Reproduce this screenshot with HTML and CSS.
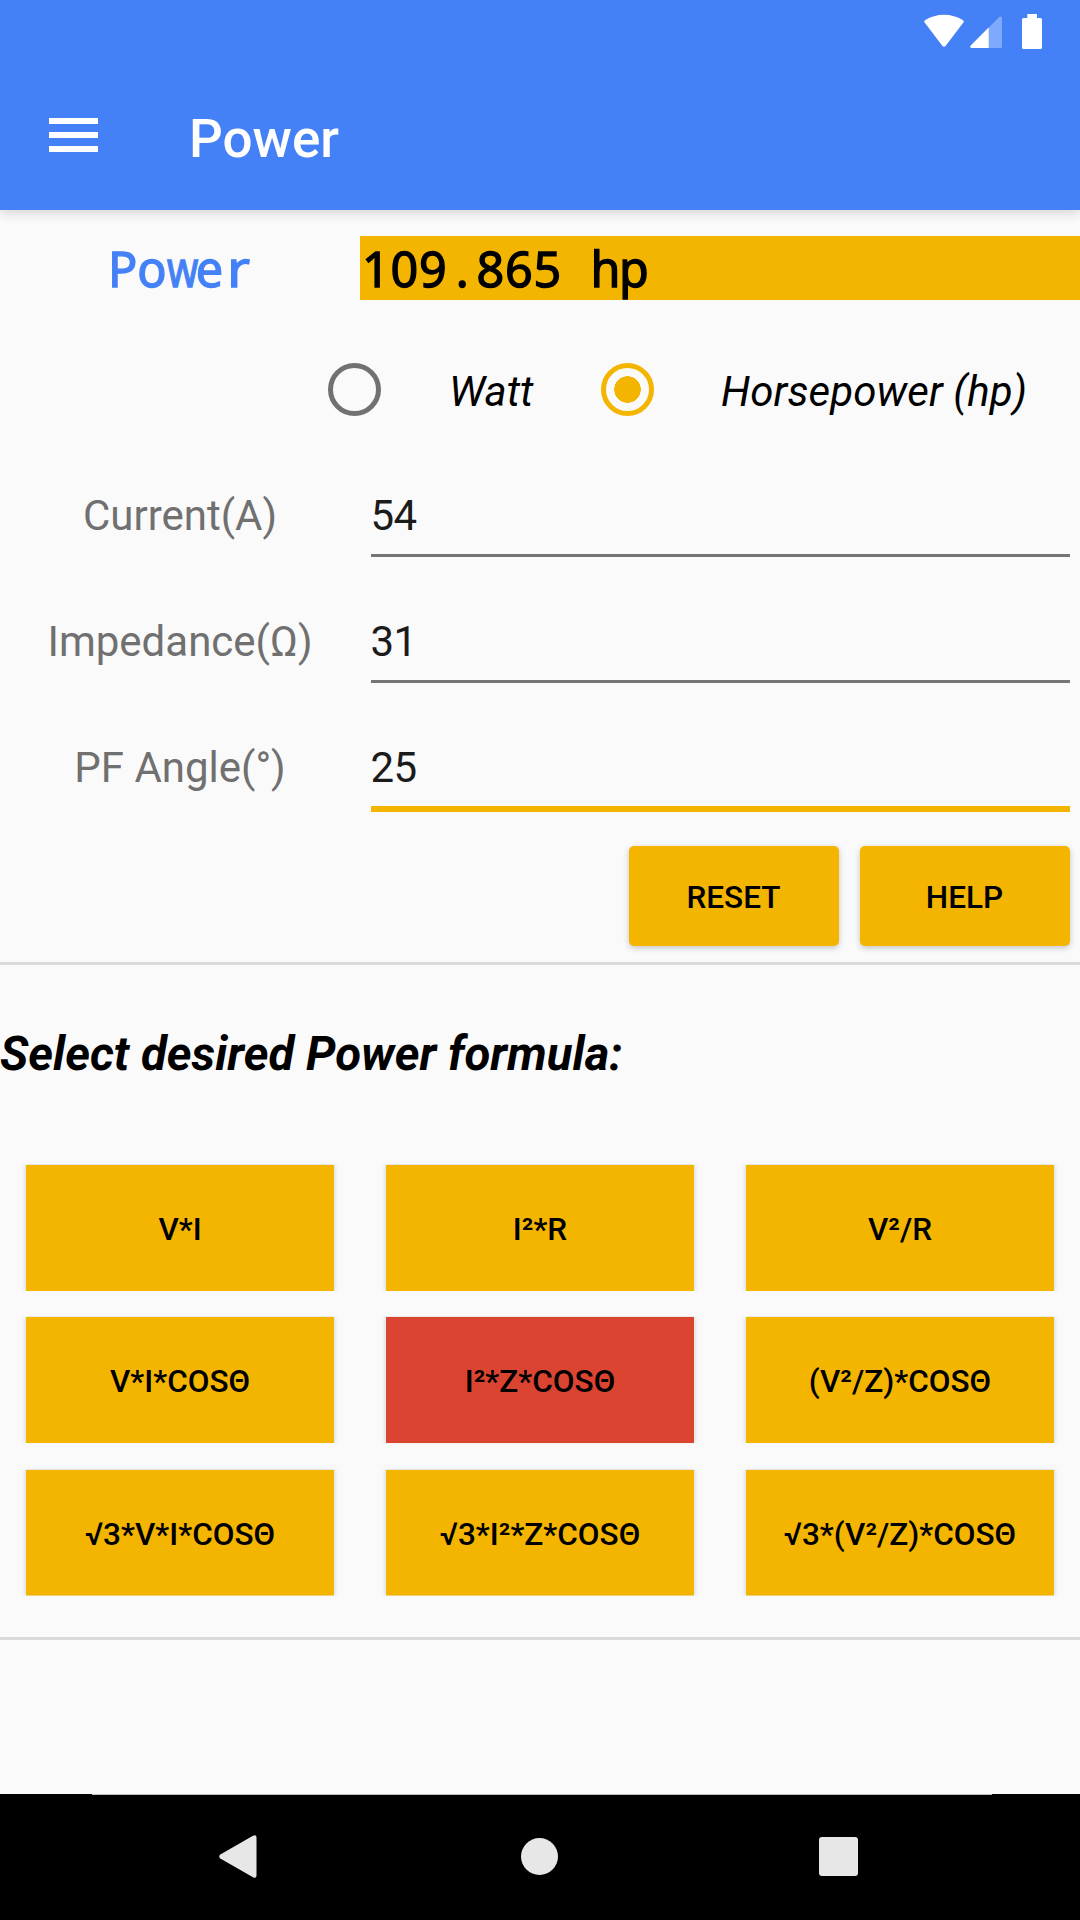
FILE: index.html
```
<!DOCTYPE html>
<html>
<head>
<meta charset="utf-8">
<title>Power</title>
<link rel="stylesheet" href="styles.css">
</head>
<body>
<header class="topbar">
  <div class="status">
    <svg class="wifi" width="42" height="34" viewBox="0 0 42 34"><path d="M1.6 8.5Q.6 7.2 2 6.3Q10.500 .8 21 .8T40 6.300Q41.400 7.200 40.400 8.500L22.700 31.700Q21 33.600 19.300 31.700Z" fill="#fff"/></svg>
    <svg class="signal" width="32" height="32" viewBox="0 0 32 32"><path d="M29.500 .8Q31.800 -.3 32 2V30.500Q32 32 30.500 32H1.800Q-.8 31.600 .8 29.500Z" fill="#7fa9fa"/><path d="M18.700 11.600V32H1.800Q-.8 31.600 .8 29.500Z" fill="#fff"/></svg>
    <svg class="battery" width="20" height="35" viewBox="0 0 20 35"><path d="M5.300 0H15V4H18.500Q20 4 20 5.500V33.500Q20 35 18.500 35H1.500Q0 35 0 33.500V5.500Q0 4 1.500 4H5.300Z" fill="#fff"/></svg>
  </div>
  <div class="title-row">
    <div class="menu"><i></i><i></i><i></i></div>
    <div class="title">Power</div>
  </div>
</header>

<section class="calc">
  <div class="result">
    <div class="result-label">Po<span class="cell"><span class="narrow">w</span></span>e<span class="r">r</span></div>
    <div class="result-value">109<span class="dot">.</span>865<span class="space"> </span><span class="unit">hp</span></div>
  </div>
  <div class="units">
    <span class="radio"></span><span class="watt">Watt</span>
    <span class="radio on"></span><span class="horse">Horsepower (hp)</span>
  </div>
  <div class="field">
    <label>Current(A)</label>
    <div class="entry">54</div>
  </div>
  <div class="field">
    <label>Impedance(Ω)</label>
    <div class="entry">31</div>
  </div>
  <div class="field">
    <label>PF Angle(°)</label>
    <div class="entry focus">25</div>
  </div>
  <div class="actions">
    <div class="btn">RESET</div>
    <div class="btn">HELP</div>
  </div>
</section>

<section class="formulas">
  <div class="heading">Select desired Power formula:</div>
  <div class="grid">
    <div class="formula">V*I</div>
    <div class="formula">I²*R</div>
    <div class="formula">V²/R</div>
    <div class="formula">V*I*COSΘ</div>
    <div class="formula selected">I²*Z*COSΘ</div>
    <div class="formula">(V²/Z)*COSΘ</div>
    <div class="formula">√3*V*I*COSΘ</div>
    <div class="formula">√3*I²*Z*COSΘ</div>
    <div class="formula">√3*(V²/Z)*COSΘ</div>
  </div>
</section>

<footer class="navbar">
  <div class="edge"></div>
  <div class="keys">
    <svg class="back" width="38" height="43" viewBox="0 0 38 43"><path d="M34 .8Q37.300 -.8 37.500 2.500V40.500Q37.300 43.800 34 42.200L1.300 23.500Q-.8 21.500 1.300 19.500Z" fill="#e7e7e7"/></svg>
    <div class="home"></div>
    <div class="recent"></div>
  </div>
</footer>
</body>
</html>
```
FILE: styles.css
```
* {
  box-sizing: border-box;
}
body {
  margin: 0;
  width: 1080px;
  height: 1920px;
  display: flex;
  flex-direction: column;
  background: #fafafa;
  font-family: Roboto, sans-serif;
  color: #000;
  overflow: hidden;
}

.topbar {
  height: 210px;
  background: #4481f6;
  box-shadow: 0 2px 12px rgba(0,0,0,0.18);
}
.status {
  height: 64px;
  padding: 14px 38px 0 0;
  display: flex;
  justify-content: flex-end;
}
.signal { margin: 2px 20px 0 5px; }
.title-row {
  display: flex;
  padding-left: 49px;
}
.menu {
  width: 49px;
  padding-top: 54px;
  display: flex;
  flex-direction: column;
  gap: 8.5px;
}
.menu i {
  height: 5.6px;
  background: #fff;
}
.title {
  margin: 44px 0 0 91px;
  font-size: 53px;
  line-height: 62px;
  font-weight: 500;
  color: #fff;
}

.calc {
  height: 755px;
  border-bottom: 3px solid #dadada;
}
.result {
  display: flex;
  padding-top: 26px;
  font-family: "Noto Sans", sans-serif;
  font-size: 48.500px;
  line-height: 64px;
  -webkit-text-stroke: 1.3px;
}
.result-label {
  width: 360px;
  padding-left: 108px;
  color: #4481f6;
}
.cell {
  display: inline-block;
  width: 29px;
}
.narrow {
  display: inline-block;
  transform: scaleX(0.82);
  transform-origin: 0 0;
}
.r {
  display: inline-block;
  margin-left: 4px;
  transform: scaleX(1.15);
  transform-origin: 0 0;
}
.result-value {
  flex: 1;
  padding-left: 2px;
  background: #f4b500;
  letter-spacing: 0.8px;
}
.dot { padding: 0 7px 0 8px; }
.space { padding-right: 15px; }
.unit { letter-spacing: -1.5px; }

.units {
  display: flex;
  align-items: center;
  height: 122px;
  padding: 0 0 2px 328px;
  margin-top: 29px;
  font-size: 42px;
  font-style: italic;
}
.radio {
  width: 53px;
  height: 53px;
  border: 5.5px solid #717171;
  border-radius: 50%;
}
.radio.on {
  border-color: #f4b500;
  background: radial-gradient(circle, #f4b500 13px, transparent 13.500px);
}
.watt {
  width: 220px;
  padding: 5px 0 0 68px;
}
.horse {
  padding: 5px 0 0 67px;
  letter-spacing: 0.1px;
}

.field {
  display: flex;
  height: 126px;
}
.field label {
  width: 360px;
  padding-top: 40px;
  font-size: 42px;
  line-height: 50px;
  text-align: center;
  color: #707070;
}
.entry {
  width: 699px;
  height: 106px;
  margin-left: 10.500px;
  padding-top: 40px;
  font-size: 42px;
  line-height: 50px;
  letter-spacing: -0.5px;
  color: #1b1b1b;
  border-bottom: 3px solid #757575;
}
.entry.focus {
  height: 109px;
  border-bottom: 6px solid #f4b500;
}

.actions {
  display: flex;
  justify-content: flex-end;
  gap: 21px;
  padding: 17px 10.500px 0 0;
}
.btn {
  width: 210px;
  height: 100px;
  border-radius: 5px;
  background: #f4b500;
  box-shadow: 0 2px 6px rgba(0,0,0,0.22);
  font-size: 31.500px;
  font-weight: 500;
  line-height: 104px;
  text-align: center;
}

.heading {
  margin-top: 61px;
  font-size: 47.300px;
  line-height: 56px;
  font-weight: bold;
  font-style: italic;
}
.formulas {
  height: 675px;
  border-bottom: 3px solid #dadada;
}
.grid {
  display: grid;
  grid-template-columns: repeat(3, 308px);
  grid-auto-rows: 126px;
  gap: 26.300px 52px;
  padding: 83px 26px 0;
}
.formula {
  background: #f4b500;
  box-shadow: 0 0 5px rgba(0,0,0,0.2);
  clip-path: inset(-1px -6px 0 -6px);
  font-size: 31.500px;
  font-weight: 500;
  line-height: 130px;
  text-align: center;
}
.formula.selected { background: #dc4432; }

.navbar {
  margin-top: auto;
  height: 126px;
  background: #000;
}
.edge {
  height: 1px;
  margin: 0 88px 0 92px;
  background: #b9bfbc;
}
.keys {
  display: flex;
  align-items: center;
  padding: 40px 0 0 219px;
}
.home {
  width: 37px;
  height: 37px;
  margin-left: 264px;
  border-radius: 50%;
  background: #e7e7e7;
}
.recent {
  width: 39px;
  height: 39px;
  margin-left: 261px;
  border-radius: 3px;
  background: #e7e7e7;
}
```
